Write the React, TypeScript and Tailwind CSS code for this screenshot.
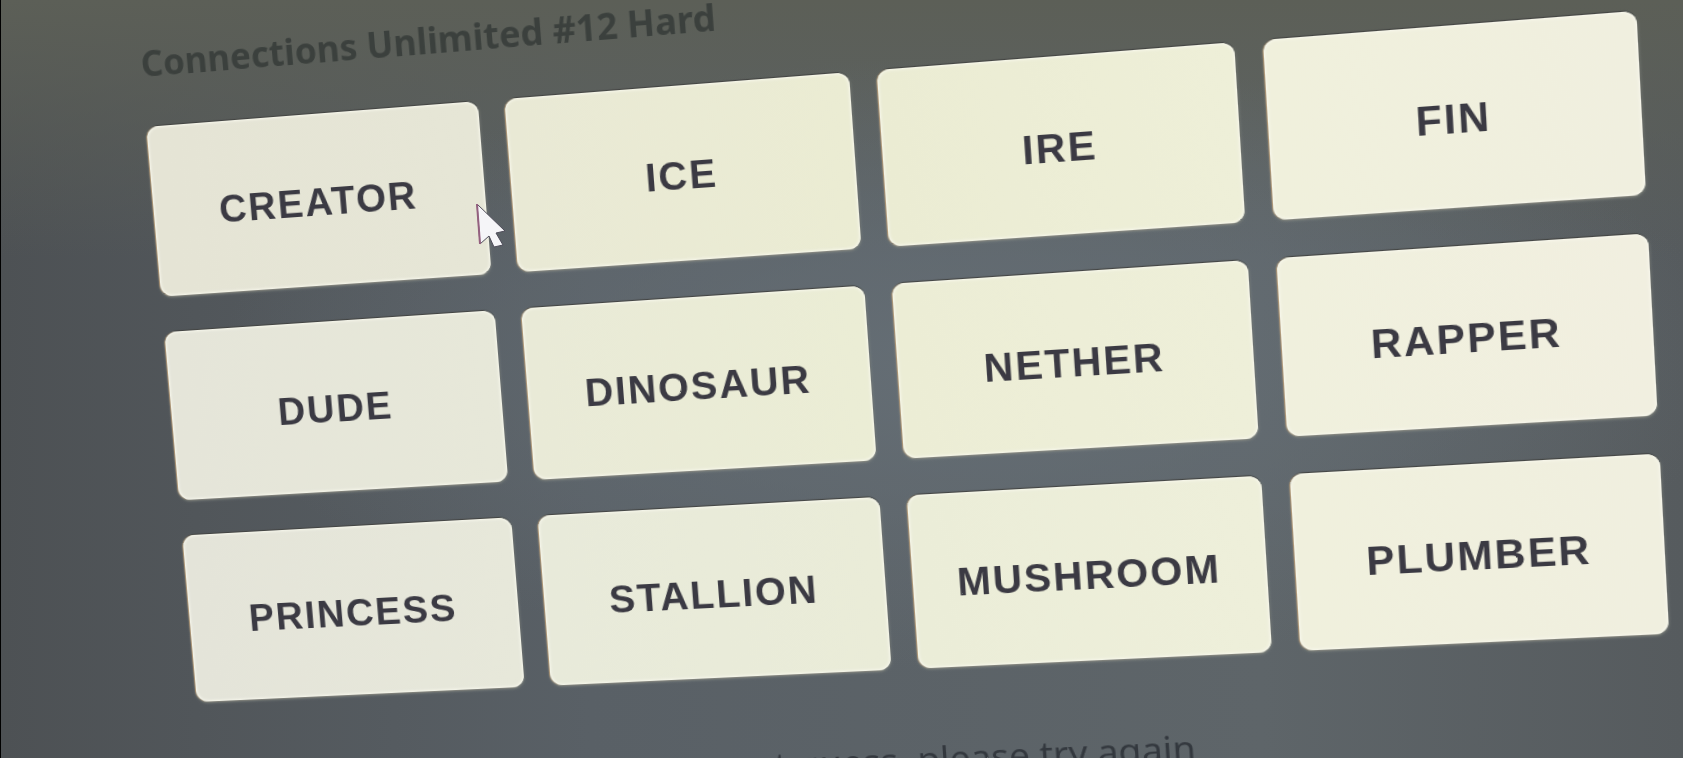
import React from "react";

interface Tile {
  word: string;
  tone: string;
}

const tiles: Tile[] = [
  { word: "CREATOR", tone: "from-[#e5e4d5] to-[#e6e6d6]" },
  { word: "ICE", tone: "from-[#e9e9d5] to-[#ebecd3]" },
  { word: "IRE", tone: "from-[#ebecd3] to-[#eeefd8]" },
  { word: "FIN", tone: "from-[#f0f0dc] to-[#f0efdf]" },
  { word: "DUDE", tone: "from-[#e5e5d9] to-[#e7e8d9]" },
  { word: "DINOSAUR", tone: "from-[#e9ead7] to-[#ebedd5]" },
  { word: "NETHER", tone: "from-[#ecedd5] to-[#eeefd9]" },
  { word: "RAPPER", tone: "from-[#f0f0dd] to-[#f1efe0]" },
  { word: "PRINCESS", tone: "from-[#e4e4d9] to-[#e7e8da]" },
  { word: "STALLION", tone: "from-[#e8eada] to-[#eaecd8]" },
  { word: "MUSHROOM", tone: "from-[#ebedd8] to-[#eeefda]" },
  { word: "PLUMBER", tone: "from-[#f0f0dd] to-[#f0efdf]" },
];

const TileButton: React.FC<Tile> = ({ word, tone }: Tile) => {
  return (
    <button
      type="button"
      className={`h-[171px] rounded-xl bg-linear-to-r ${tone} pt-1 font-['Liberation_Sans',Arial,sans-serif] text-[38px] leading-10 font-bold tracking-wider text-[#3b3a43] shadow-[inset_0_0_3px_1px_#f8f8ee,-1px_0_1px_#b39a78,0_-1px_1px_#35393b,0_1px_3px_#8d9188]`}
    >
      {word}
    </button>
  );
};

const Cursor: React.FC = () => {
  return (
    <svg
      aria-hidden="true"
      viewBox="0 0 34 48"
      className="pointer-events-none absolute top-[201px] left-[473px] h-12 w-[34px]"
    >
      <path
        d="M3 3 L31 30 L22 32 L29 44 L20 46 L15 35 L6 43 Z"
        fill="#f5f5f8"
        stroke="#4f4d5a"
        strokeWidth="1"
        strokeLinejoin="round"
      />
      <path d="M3 3 L6 43" stroke="#94607f" strokeWidth="2" />
    </svg>
  );
};

const App: React.FC = () => {
  return (
    <main className="relative h-screen overflow-hidden border-l border-black bg-[#5c646b] bg-[radial-gradient(ellipse_at_58%_48%,#656e75_0%,#656e7500_55%),linear-gradient(180deg,#5c5f57_0%,#5c5f5700_34%),linear-gradient(90deg,#4d5154_0%,#596066_35%,#5e6569_75%,#565b5e_100%)] pt-11 pr-[147px] pl-[138px] font-['Noto_Sans','Open_Sans',sans-serif]">
      {/* the whole board is seen at an angle */}
      <div className="flex origin-top-left [transform:matrix3d(0.98795,-0.08147,0,-0.00005392,0.08828,1.00065,0,0.00002371,0,0,1,0,0,0,0,1)] flex-col">
        <h1 className="mb-[43px] text-[35px] leading-10 font-bold text-[#3b403d]">
          Connections Unlimited #12 Hard
        </h1>

        <div className="grid grid-cols-4 gap-x-[26px] gap-y-9">
          {tiles.map((tile) => (
            <TileButton key={tile.word} word={tile.word} tone={tile.tone} />
          ))}
        </div>

        <p className="mt-[70px] text-center text-[35px] leading-10 text-[#33383e]">
          Incorrect guess, please try again
        </p>
      </div>

      <Cursor />
    </main>
  );
};

export default App;
